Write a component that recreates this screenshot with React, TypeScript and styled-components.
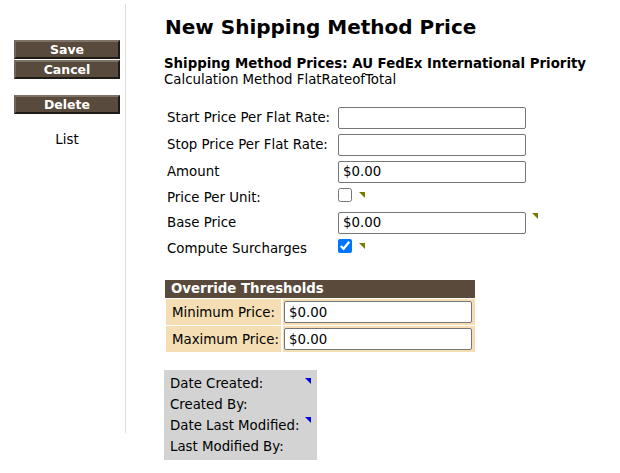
import styled, { createGlobalStyle } from 'styled-components'

const GlobalStyle = createGlobalStyle`
  body {
    margin: 0;
    font-family: "DejaVu Sans", Verdana, sans-serif;
    font-size: 13.33px;
    color: #000;
    background: #fff;
  }
`

const formRows = [
  { label: 'Start Price Per Flat Rate:', kind: 'text', value: '' },
  { label: 'Stop Price Per Flat Rate:', kind: 'text', value: '' },
  { label: 'Amount', kind: 'text', value: '$0.00' },
  { label: 'Price Per Unit:', kind: 'check', checked: false, marker: true },
  { label: 'Base Price', kind: 'text', value: '$0.00', marker: true },
  { label: 'Compute Surcharges', kind: 'check', checked: true, marker: true },
]

const auditRows = [
  { label: 'Date Created:', marker: 5 },
  { label: 'Created By:' },
  { label: 'Date Last Modified:', marker: 2 },
  { label: 'Last Modified By:' },
]

const App = () => {
  return (
    <>
      <GlobalStyle />
      <Page>
        <Sidebar>
          <ButtonGroup>
            <ActionButton>Save</ActionButton>
            <ActionButton>Cancel</ActionButton>
          </ButtonGroup>
          <ButtonGroup>
            <ActionButton>Delete</ActionButton>
          </ButtonGroup>
          <ListLink>List</ListLink>
        </Sidebar>

        <Main>
          <Title>New Shipping Method Price</Title>
          <SubTitle>Shipping Method Prices: AU FedEx International Priority</SubTitle>
          <Calc>Calculation Method FlatRateofTotal</Calc>

          <Form>
            {formRows.map((row) =>
              row.kind === 'text' ? (
                <FormRow key={row.label}>
                  <Label>{row.label}</Label>
                  <Field>
                    <TextInput defaultValue={row.value} />
                    {row.marker && <Marker gap={6} top={1} />}
                  </Field>
                </FormRow>
              ) : (
                <CheckRow key={row.label}>
                  <Label>{row.label}</Label>
                  <Field>
                    <Check type="checkbox" defaultChecked={row.checked} />
                    {row.marker && <Marker gap={7} top={4} />}
                  </Field>
                </CheckRow>
              )
            )}
          </Form>

          <Thresholds>
            <ThresholdHead>Override Thresholds</ThresholdHead>
            <ThresholdRow>
              <ThresholdLabel>Minimum Price:</ThresholdLabel>
              <ThresholdCell>
                <TextInput defaultValue="$0.00" />
              </ThresholdCell>
            </ThresholdRow>
            <ThresholdRow>
              <ThresholdLabel>Maximum Price:</ThresholdLabel>
              <ThresholdCell>
                <TextInput defaultValue="$0.00" />
              </ThresholdCell>
            </ThresholdRow>
          </Thresholds>

          <Audit>
            {auditRows.map((row) => (
              <AuditRow key={row.label}>
                <span>{row.label}</span>
                {row.marker !== undefined && <BlueMarker top={row.marker} />}
              </AuditRow>
            ))}
          </Audit>
        </Main>
      </Page>
    </>
  )
}

export default App

const Page = styled.div`
  display: flex;
  align-items: flex-start;
  padding-top: 4px;
`
const Sidebar = styled.div`
  width: 126px;
  height: 429px;
  border-right: 1px solid #dcdcdc;
  padding: 36px 0 0 14px;
  box-sizing: border-box;
  display: flex;
  flex-direction: column;
`
const ButtonGroup = styled.div`
  display: flex;
  flex-direction: column;
  gap: 1px;
  margin-bottom: 16px;
`
const ActionButton = styled.button`
  width: 106px;
  height: 19px;
  padding: 0;
  background: #584a3c;
  color: #fff;
  font-family: "DejaVu Sans", Verdana, sans-serif;
  font-weight: 700;
  font-size: 12.5px;
  line-height: 15px;
  border: 2px solid;
  border-color: #7c7266 #1e1a16 #1e1a16 #6e6458;
`
const ListLink = styled.div`
  width: 106px;
  text-align: center;
  margin-top: 2px;
`
const Main = styled.div`
  padding-left: 38px;
  display: flex;
  flex-direction: column;
  align-items: flex-start;
`
const Title = styled.h1`
  font-size: 20px;
  font-weight: 700;
  margin: 11px 0 0 1px;
  line-height: 24px;
`
const SubTitle = styled.div`
  font-weight: 700;
  margin-top: 17px;
  line-height: 16px;
`
const Calc = styled.div`
  line-height: 16px;
`
const Form = styled.div`
  margin-top: 16px;
  padding-left: 3px;
  display: flex;
  flex-direction: column;
`
const FormRow = styled.div`
  display: grid;
  grid-template-columns: 171px auto;
  align-items: center;
  height: 27px;
`
const CheckRow = styled(FormRow)`
  height: 24px;
  align-items: start;

  & > span {
    align-self: center;
    padding-top: 1px;
  }
  & > div {
    padding-top: 3px;
  }
`
const Label = styled.span`
  white-space: nowrap;
`
const Field = styled.div`
  display: flex;
  align-items: flex-start;
`
const TextInput = styled.input`
  width: 188px;
  height: 22px;
  box-sizing: border-box;
  border: 1px solid #767676;
  border-radius: 2px;
  padding: 0 4px;
  font-family: "DejaVu Sans", Verdana, sans-serif;
  font-size: 13.33px;
  color: #000;
  background: #fff;
`
const Check = styled.input`
  width: 14px;
  height: 14px;
  margin: 0;
  accent-color: #0075ff;
`
const Marker = styled.span<{ gap: number; top: number }>`
  width: 0;
  height: 0;
  margin-left: ${(p) => p.gap}px;
  margin-top: ${(p) => p.top}px;
  border-top: 6px solid #7a7a00;
  border-left: 6px solid transparent;
`
const Thresholds = styled.div`
  margin: 20px 0 0 1px;
  width: 310px;
  display: flex;
  flex-direction: column;
  gap: 1px;
`
const ThresholdHead = styled.div`
  background: #594a3b;
  color: #fff;
  font-weight: 700;
  height: 18px;
  line-height: 18px;
  padding-left: 6px;
`
const ThresholdRow = styled.div`
  display: grid;
  grid-template-columns: 115px 1fr;
  gap: 2px;
  padding-left: 1px;
  height: 26px;
`
const ThresholdLabel = styled.div`
  background: #f5deb3;
  display: flex;
  align-items: center;
  padding-left: 6px;
`
const ThresholdCell = styled.div`
  background: #f5deb3;
  display: flex;
  align-items: center;
  padding-left: 1px;
`
const Audit = styled.div`
  margin-top: 18px;
  width: 153px;
  height: 90px;
  box-sizing: border-box;
  background: #d3d3d3;
  padding: 3px 0 0 6px;
`
const AuditRow = styled.div`
  position: relative;
  height: 21px;
  line-height: 21px;
  white-space: nowrap;
`
const BlueMarker = styled.span<{ top: number }>`
  position: absolute;
  right: 6px;
  top: ${(p) => p.top}px;
  width: 0;
  height: 0;
  border-top: 6px solid #0000e0;
  border-left: 6px solid transparent;
`
